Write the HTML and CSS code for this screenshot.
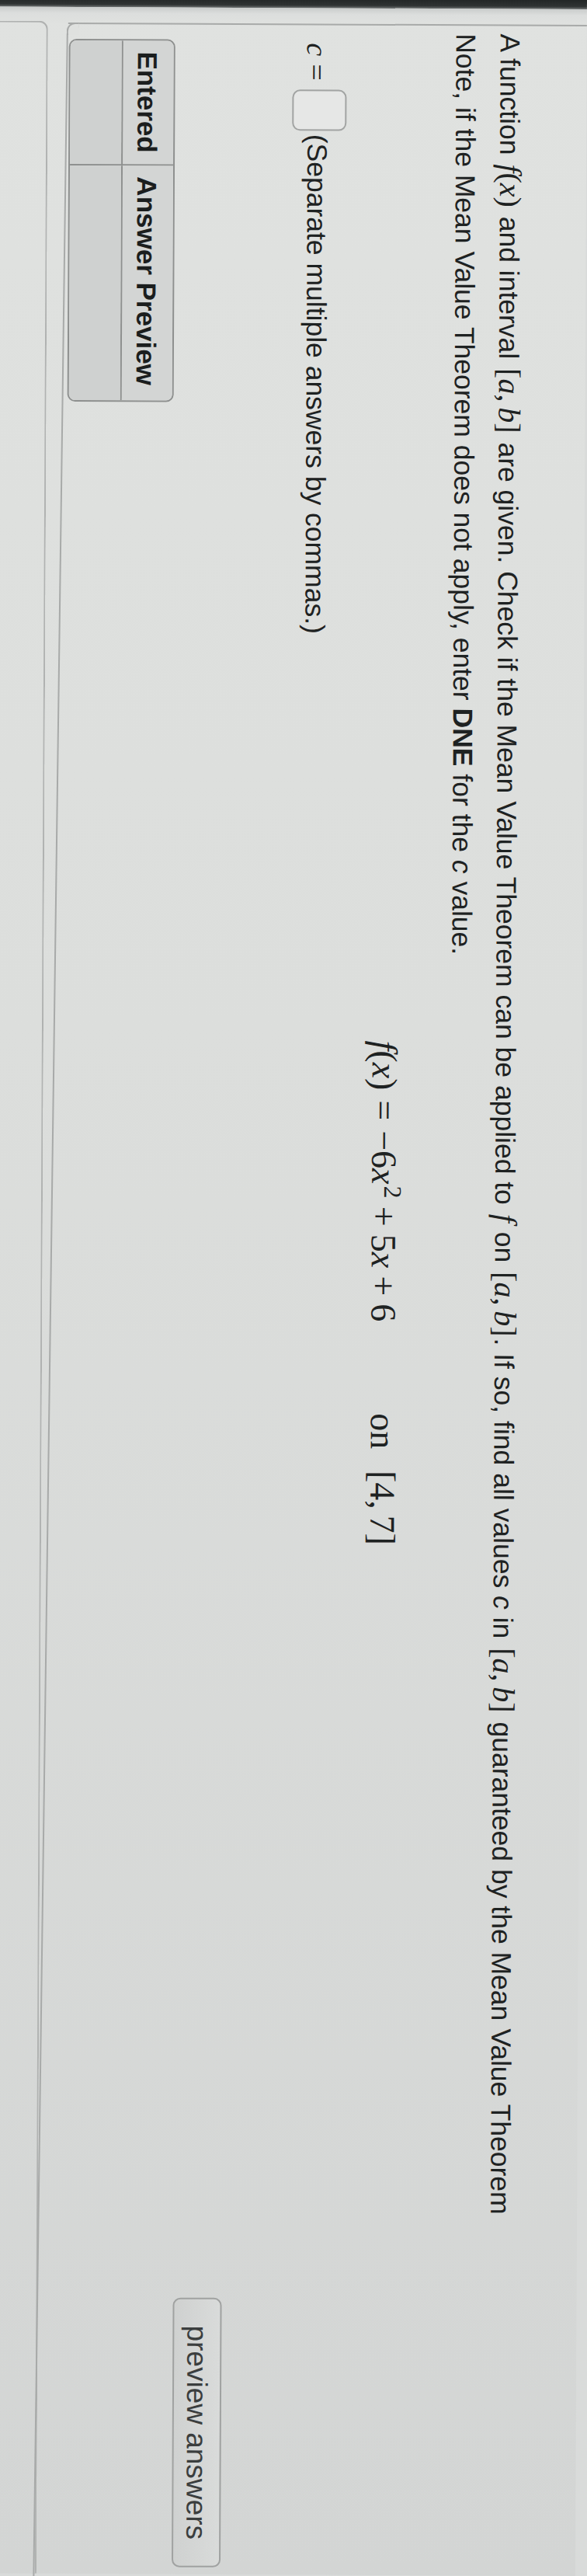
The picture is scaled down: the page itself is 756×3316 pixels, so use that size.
FILE: index.html
```html
<!DOCTYPE html>
<html lang="en">
<head>
<meta charset="utf-8">
<title>Mean Value Theorem</title>
<link rel="stylesheet" href="styles.css">
</head>
<body>
<div class="viewport">
  <div class="screen">
    <div class="bezel"></div>
    <div class="gutter"></div>
    <div class="stack">
      <div class="panel">
        <p class="q">A function <span class="m"><i>f</i>(<i>x</i>)</span> and interval <span class="m">[<i>a</i>,<span class="th"></span><i>b</i>]</span> are given. Check if the Mean Value Theorem can be applied to <span class="m"><i>f</i></span> on <span class="m">[<i>a</i>,<span class="th"></span><i>b</i>]</span>. If so, find all values <i class="ci">c</i> in <span class="m">[<i>a</i>,<span class="th"></span><i>b</i>]</span> guaranteed by the Mean Value Theorem<br>Note, if the Mean Value Theorem does not apply, enter <b>DNE</b> for the <i class="ci">c</i> value.</p>

        <div class="formula">
          <span class="expr"><i>f</i>(<i>x</i>)<span class="rel">=</span>−6<i>x</i><sup>2</sup><span class="bin">+</span>5<i>x</i><span class="bin">+</span>6</span>
          <span class="cond">on <span class="iv">[4,<span class="th"></span>7]</span></span>
        </div>

        <div class="answer-row">
          <span class="clabel"><i>c</i><span class="rel">=</span></span>
          <span class="inbox"></span>
          <span class="hint">(Separate multiple answers by commas.)</span>
        </div>

        <div class="preview-row">
          <button class="btn" type="button">preview answers</button>
        </div>

        <table class="answers">
          <tr class="head"><th class="c1">Entered</th><th class="c2">Answer Preview</th></tr>
          <tr class="body"><td class="c1"></td><td class="c2"></td></tr>
        </table>
      </div>
      <div class="panel2"></div>
    </div>
  </div>
</div>
</body>
</html>
```

FILE: styles.css
```css
html, body {
  margin: 0;
  padding: 0;
  background: #dadcdb;
}

.viewport {
  position: relative;
  width: 756px;
  height: 3316px;
  overflow: hidden;
  background: #d9dbda;
}

/* the photographed screen, laid out landscape and turned a quarter turn */
.screen {
  position: absolute;
  top: 0;
  left: 0;
  width: 3316px;
  height: 756px;
  display: flex;
  transform-origin: 0 0;
  transform: translate(756px, 0) rotate(90.26deg);
  background: linear-gradient(to right, #e0e2e0 0%, #dcdedc 40%, #d3d5d4 100%);
  font-family: "Liberation Sans", Arial, sans-serif;
  color: #1e2222;
}

.bezel {
  flex: none;
  width: 12px;
  background: linear-gradient(to right, #222626 0%, #2f3333 70%, #6d7171 100%);
}

.gutter {
  flex: none;
  width: 20px;
  background: linear-gradient(to right, #c9cccb 0%, #dcdedd 40%, #dfe1df 100%);
}

.stack {
  flex: 1;
  display: flex;
  flex-direction: column;
  min-width: 0;
}

.panel {
  position: relative;
  height: 723px;
  box-sizing: border-box;
  border-left: 2px solid #a8aaa9;
  padding: 69px 9px 0 10px;
}

.panel::before {
  content: "";
  position: absolute;
  left: -2px;
  bottom: -2px;
  width: 14px;
  height: 14px;
  border-left: 2px solid #a8aaa9;
  border-bottom: 2px solid #a8aaa9;
  border-bottom-left-radius: 11px;
  background: #dfe1df;
}

.panel::after {
  content: "";
  position: absolute;
  left: 12px;
  bottom: -2px;
  width: 3400px;
  height: 0;
  border-top: 2px solid #a8aaa9;
  transform-origin: 0 50%;
  transform: rotate(0.5deg);
}

.panel2 {
  flex: none;
  margin-top: 26px;
  height: 60px;
  border-top: 2px solid #b0b2b1;
  border-left: 2px solid #b0b2b1;
  border-top-left-radius: 11px;
  margin-left: -2px;
}

.q {
  margin: 0;
  font-size: 35.5px;
  line-height: 57px;
  white-space: nowrap;
}

.q b {
  font-weight: bold;
}

.ci {
  font-style: italic;
}

.m {
  font-family: "Liberation Serif", "Times New Roman", serif;
  font-size: 40px;
  font-style: normal;
  margin: 0 2px;
}

.m i {
  font-style: italic;
}

.th {
  display: inline-block;
  width: 0.17em;
}

.formula {
  margin-top: 40px;
  display: flex;
  justify-content: center;
  align-items: baseline;
  font-family: "Liberation Serif", "Times New Roman", serif;
  font-size: 46px;
  line-height: 60px;
  padding-right: 20px;
}

.formula i {
  font-style: italic;
}

.formula sup {
  font-size: 0.7em;
  line-height: 0;
  vertical-align: 0.5em;
  margin-left: 2px;
}

.rel {
  margin: 0 0.28em;
}

.bin {
  margin: 0 0.22em;
}

.cond {
  margin-left: 118px;
}

.iv {
  margin-left: 0.35em;
}

.answer-row {
  margin-top: 24px;
  height: 70px;
  display: flex;
  align-items: center;
  padding-left: 13px;
}

.clabel {
  font-family: "Liberation Serif", "Times New Roman", serif;
  font-size: 38px;
  line-height: 57px;
  margin-top: 6px;
}

.clabel .rel {
  margin: 0 0 0 10px;
}

.inbox {
  flex: none;
  width: 53px;
  height: 70px;
  box-sizing: border-box;
  margin-left: 12px;
  border: 2px solid #a2a4a3;
  border-radius: 10px;
  background: #e6e7e6;
}

.hint {
  margin-left: 4px;
  font-size: 35.5px;
  line-height: 57px;
  margin-top: 6px;
  white-space: nowrap;
}

.preview-row {
  margin-top: 78px;
  display: flex;
  justify-content: flex-end;
}

.btn {
  width: 347px;
  height: 63px;
  box-sizing: border-box;
  padding: 0;
  border: 2px solid #a0a2a1;
  border-radius: 10px;
  background: linear-gradient(to bottom, #d9dbda 0%, #cfd1d0 100%);
  font-family: "Liberation Sans", Arial, sans-serif;
  font-size: 37px;
  color: #3b3e3e;
}

.answers {
  margin-top: 10px;
  margin-left: 9px;
  border-collapse: separate;
  border-spacing: 0;
  border: 2px solid #8e908f;
  border-radius: 10px;
  overflow: hidden;
  font-size: 35px;
}

.answers th,
.answers td {
  padding: 0 0 0 14px;
  text-align: left;
  box-sizing: border-box;
}

.answers th {
  font-weight: bold;
  color: #1b1e1e;
  background: #d3d5d4;
  height: 67px;
  border-bottom: 2px solid #8e908f;
  padding-top: 2px;
}

.answers td {
  height: 66px;
  background: #cfd1d0;
}

.answers .c1 {
  width: 161px;
  border-right: 2px solid #8e908f;
}

.answers .c2 {
  width: 302px;
}
```
